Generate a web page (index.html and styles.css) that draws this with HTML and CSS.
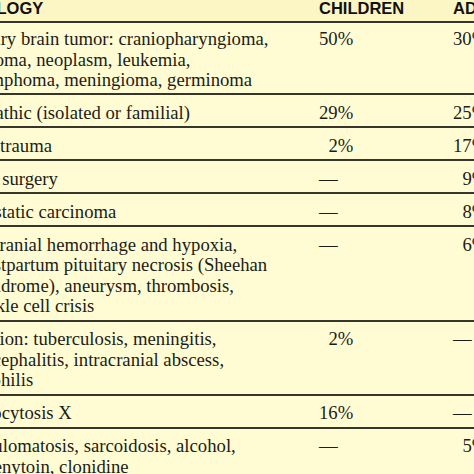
FILE: index.html
```html
<!DOCTYPE html>
<html>
<head>
<meta charset="utf-8">
<link rel="stylesheet" href="styles.css">
</head>
<body>
<div class="frame">
<table class="etio">
<colgroup><col class="c1"><col class="c2"><col class="c3"></colgroup>
<thead>
<tr><th>ETIOLOGY</th><th>CHILDREN</th><th>ADULTS</th></tr>
</thead>
<tbody>
<tr class="first"><td class="cause">Primary brain tumor: craniopharyngioma,<br>glioma, neoplasm, leukemia,<br>lymphoma, meningioma, germinoma</td><td>50%</td><td>30%</td></tr>
<tr><td class="cause">Idiopathic (isolated or familial)</td><td>29%</td><td>25%</td></tr>
<tr><td class="cause">Head trauma</td><td><span class="pad">2%</span></td><td>17%</td></tr>
<tr><td class="cause">Brain surgery</td><td>—</td><td><span class="pad">9%</span></td></tr>
<tr><td class="cause">Metastatic carcinoma</td><td>—</td><td><span class="pad">8%</span></td></tr>
<tr><td class="cause">Intracranial hemorrhage and hypoxia,<br>postpartum pituitary necrosis (Sheehan<br>syndrome), aneurysm, thrombosis,<br>sickle cell crisis</td><td>—</td><td><span class="pad">6%</span></td></tr>
<tr><td class="cause">Infection: tuberculosis, meningitis,<br>encephalitis, intracranial abscess,<br>syphilis</td><td><span class="pad">2%</span></td><td>—</td></tr>
<tr><td class="cause">Histiocytosis X</td><td>16%</td><td>—</td></tr>
<tr><td class="cause">Granulomatosis, sarcoidosis, alcohol,<br>phenytoin, clonidine</td><td>—</td><td><span class="pad">5%</span></td></tr>
</tbody>
</table>
</div>
</body>
</html>
```

FILE: styles.css
```css
html, body {
  margin: 0;
  padding: 0;
  background: #fffcd4;
}
.frame {
  width: 474px;
  height: 474px;
  overflow: hidden;
  background: #fffcd4;
}
.etio {
  margin-left: -44px;
  border-collapse: collapse;
  table-layout: fixed;
  width: 597px;
  color: #1c1c18;
}
.c1 { width: 363px; }
.c2 { width: 134px; }
.c3 { width: 100px; }
.etio th {
  background: #fcf5c4;
  font-family: "Liberation Sans", Arial, sans-serif;
  font-weight: bold;
  font-size: 16.5px;
  line-height: 16px;
  height: 21px;
  padding: 0 0 5px 0;
  text-align: left;
  vertical-align: top;
  box-sizing: border-box;
  color: #111;
}
.etio th:first-child {
  padding-left: 2px;
}
.etio td {
  font-family: "Liberation Serif", "Times New Roman", serif;
  font-size: 18.7px;
  line-height: 20.5px;
  padding: 7.5px 0 3px 0;
  border-top: 2px solid #35352c;
  vertical-align: top;
  white-space: nowrap;
  text-align: left;
}
.etio tr.first td {
  padding-top: 6px;
  padding-bottom: 2.5px;
}
.etio td.cause {
  padding-left: 19px;
  text-indent: -19px;
}
.pad {
  padding-left: 9.4px;
}
```
